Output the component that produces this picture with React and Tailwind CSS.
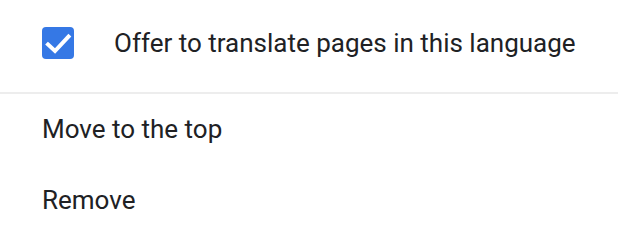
export default function App() {
  return (
    <div
      className="w-[618px] h-[250px] bg-white text-[#202124] text-[26px] leading-none"
      style={{ fontFamily: 'Roboto, "Liberation Sans", Arial, sans-serif' }}
    >
      {/* Checkbox row */}
      <div className="flex items-center h-[86px] pl-[42px]">
        <div className="w-[32px] h-[32px] rounded-[4px] bg-[#3578e5] flex items-center justify-center">
          <svg width="32" height="32" viewBox="0 0 32 32" fill="none">
            <path d="M6 17.5 L13 24 L26.5 9.5" stroke="white" strokeWidth="4" strokeLinecap="square" />
          </svg>
        </div>
        <span className="ml-[40px]">Offer to translate pages in this language</span>
      </div>

      <div className="mt-[6px] h-[2px] bg-[#ededed]" />

      {/* Menu items */}
      <div className="flex items-center h-[70px] pl-[42px]">Move to the top</div>
      <div className="flex items-center h-[72px] pl-[42px]">Remove</div>
    </div>
  )
}
